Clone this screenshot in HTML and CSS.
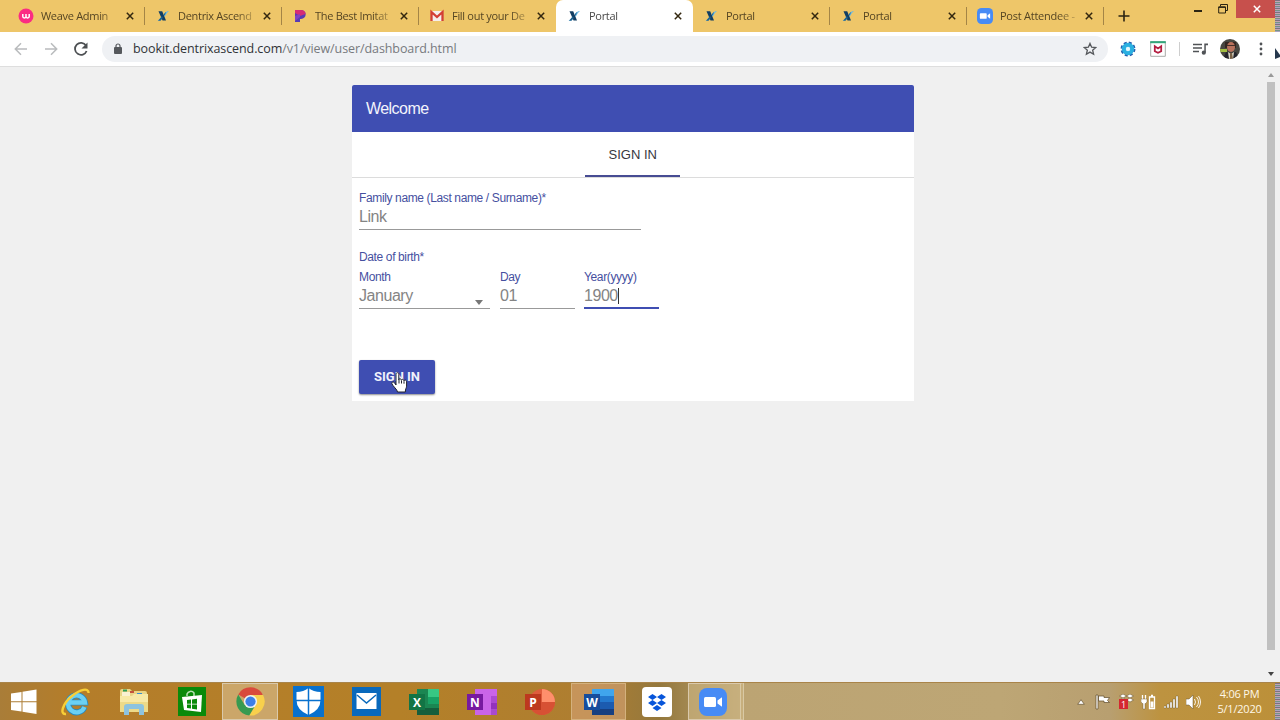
FILE: index.html
```html
<!DOCTYPE html>
<html lang="en">
<head>
    <meta charset="UTF-8">
    <meta name="viewport" content="width=device-width, initial-scale=1.0">
    <title>Portal</title>
    <link rel="stylesheet" href="styles.css">
</head>
<body>
    <svg class="defs" aria-hidden="true">
        <symbol id="close" viewBox="0 0 8 8"><path d="M.8.8l6.4 6.4M7.2.8L.8 7.2" fill="none" stroke="currentColor" stroke-width="1.5"/></symbol>
        <symbol id="portal" viewBox="0 0 16 16">
            <path d="M9 6.500Q10.500 3 14 3Q11.500 4.500 10.500 7.500L7 10.500Q5.500 13 2.500 12.800Q5 11.500 6.500 9z" fill="#69b9e6"/>
            <path d="M3.500 3.200H7.200L11 12.500H7.500z" fill="#123e63"/>
            <path d="M9 6l2-2.300L9.600 8zM3 12.700L7 8l.8 2-2.300 2.700z" fill="#1e6390"/>
        </symbol>
        <symbol id="zoom" viewBox="0 0 28 28">
            <rect width="28" height="28" rx="8" fill="#478bf5"/>
            <rect x="5" y="9" width="12" height="10" rx="1.500" fill="#fff"/>
            <path d="M18.500 12.500L23 9.300v9.400l-4.500-3.200z" fill="#fff"/>
        </symbol>
    </svg>

    <header class="tabs">
        <div class="tab">
            <svg class="favicon" viewBox="0 0 16 16"><circle cx="8" cy="8" r="7.500" fill="#fb2c83"/><path d="M4.800 6v2.600c0 1.800 3.200 1.800 3.200 0V6v2.600c0 1.800 3.200 1.800 3.200 0V6" fill="none" stroke="#fff" stroke-width="1.500"/></svg>
            <span class="tab-title">Weave Admin</span>
            <svg class="close"><use href="#close"/></svg>
        </div>
        <div class="tab">
            <svg class="favicon"><use href="#portal"/></svg>
            <span class="tab-title">Dentrix Ascend</span>
            <svg class="close"><use href="#close"/></svg>
        </div>
        <div class="tab">
            <svg class="favicon" viewBox="0 0 16 16"><path d="M3 2h6c6.500 0 6 9 0 9H8v3H3z" fill="#573bb4"/><path d="M3 2h6c3 0 4.500 2 4.500 4L8 8 3 5z" fill="#d52b75"/><path d="M3 8l5-2v3l-5 4z" fill="#8341c1"/></svg>
            <span class="tab-title">The Best Imitat</span>
            <svg class="close"><use href="#close"/></svg>
        </div>
        <div class="tab no-line">
            <svg class="favicon" viewBox="0 0 16 16"><path d="M2 3h12v10H2z" fill="#f5eeec"/><path d="M2.500 13V4L8 9l5.500-5v9" fill="none" stroke="#d33f35" stroke-width="2.300"/></svg>
            <span class="tab-title">Fill out your De</span>
            <svg class="close"><use href="#close"/></svg>
        </div>
        <div class="tab active no-line">
            <svg class="favicon"><use href="#portal"/></svg>
            <span class="tab-title">Portal</span>
            <svg class="close"><use href="#close"/></svg>
        </div>
        <div class="tab">
            <svg class="favicon"><use href="#portal"/></svg>
            <span class="tab-title">Portal</span>
            <svg class="close"><use href="#close"/></svg>
        </div>
        <div class="tab">
            <svg class="favicon"><use href="#portal"/></svg>
            <span class="tab-title">Portal</span>
            <svg class="close"><use href="#close"/></svg>
        </div>
        <div class="tab">
            <svg class="favicon"><use href="#zoom"/></svg>
            <span class="tab-title tight">Post Attendee -</span>
            <svg class="close"><use href="#close"/></svg>
        </div>
        <svg class="new-tab" viewBox="0 0 12 12"><path d="M6 .5v11M.5 6h11" stroke="#2b2412" stroke-width="1.600"/></svg>
        <div class="window-buttons">
            <svg class="minimize" viewBox="0 0 8 2"><path d="M0 0h8v2H0z" fill="#2b2412"/></svg>
            <svg class="restore" viewBox="0 0 10 10"><path d="M2.500 2.500v-2h7v6h-2M.7 3h6.800v6H.7z" fill="none" stroke="#2b2412"/><path d="M.5 3.200h7" stroke="#2b2412" stroke-width="1.400"/></svg>
            <div class="window-close"><svg viewBox="0 0 8 8"><use href="#close"/></svg></div>
        </div>
        <div class="edge"></div>
    </header>

    <nav class="toolbar">
        <svg class="nav-icon" viewBox="0 0 16 16"><path d="M14 8H2.500M8 2.300L2.300 8 8 13.700" fill="none" stroke="#b9bbbd" stroke-width="1.500"/></svg>
        <svg class="nav-icon" viewBox="0 0 16 16"><path d="M2 8h11.500M8 2.300L13.700 8 8 13.700" fill="none" stroke="#b9bbbd" stroke-width="1.500"/></svg>
        <svg class="nav-icon" viewBox="0 0 16 16"><path d="M13 4.500A6 6 0 1 0 13.600 10" fill="none" stroke="#4d5053" stroke-width="1.800"/><path d="M14.500 1.500v6h-6z" fill="#4d5053"/></svg>
        <div class="omnibox">
            <svg class="lock" viewBox="0 0 8 11"><rect y="4" width="8" height="7" rx="1" fill="#55585c"/><path d="M2 4.500V3a2 2 0 0 1 4 0v1.500" fill="none" stroke="#55585c" stroke-width="1.200"/></svg>
            <span class="url"><b>bookit.dentrixascend.com</b>/v1/view/user/dashboard.html</span>
            <svg class="star" viewBox="0 0 14 14"><path d="M7 1.400l1.650 3.800 4.100.35-3.100 2.700.95 4L7 10.100l-3.600 2.150.95-4-3.100-2.700 4.100-.35z" fill="none" stroke="#55585c" stroke-width="1.300"/></svg>
        </div>
        <svg class="ext-gear" viewBox="0 0 16 16"><circle cx="8" cy="8" r="6.200" fill="none" stroke="#265fae" stroke-width="2.500" stroke-dasharray="2.900 1.970"/><circle cx="8" cy="8" r="4.200" fill="#d6f2fa" stroke="#2bb0e1" stroke-width="4"/><circle cx="8" cy="8" r="1.800" fill="#e6f9fd"/></svg>
        <svg class="ext-shield" viewBox="0 0 16 16"><path d="M.7.7h14.600v14.600H.7z" fill="#fff" stroke="#a8aaa8"/><path d="M.2.2h15.600v2H.2z" fill="#32a77b"/><path d="M4.800 5.300v5L8 11.800l3.200-1.500v-5L8 7.500z" fill="none" stroke="#b51f42" stroke-width="1.800"/></svg>
        <span class="divider"></span>
        <svg class="media" viewBox="0 0 16 14"><path d="M1 2.500h9M1 6h9M1 9.500h6" stroke="#505356" stroke-width="1.500"/><path d="M12.300 10.500v-9H16v1.700h-2.200v7.300z" fill="#505356"/><circle cx="11.800" cy="10.700" r="2.100" fill="#505356"/></svg>
        <svg class="avatar" viewBox="0 0 20 20"><clipPath id="round"><circle cx="10" cy="10" r="10"/></clipPath><g clip-path="url(#round)"><path d="M0 0h20v20H0z" fill="#474640"/><path d="M0 10h7v3H0z" fill="#a3bd42"/><path d="M5 3h11v6H5z" fill="#332621"/><ellipse cx="11" cy="8" rx="4" ry="5" fill="#b8715c"/><path d="M7 6.500h8" stroke="#44302b" stroke-width="1"/><path d="M3 20l3-7 5 1 5-1 3 7z" fill="#24242c"/><path d="M8 13l3 2 3-2-1 7H9z" fill="#ddd8c8"/><path d="M10 14h2l1 6h-3z" fill="#776046"/></g></svg>
        <svg class="dots" viewBox="0 0 4 14"><g fill="#505356"><circle cx="2" cy="2" r="1.400"/><circle cx="2" cy="7" r="1.400"/><circle cx="2" cy="12" r="1.400"/></g></svg>
        <svg class="edge-arrow" viewBox="0 0 5 11"><path d="M0 0l5 7v2L0 11z" fill="#26384d"/></svg>
    </nav>

    <main class="page">
        <form class="card">
            <h1>Welcome</h1>
            <div class="card-tabs"><span class="card-tab">SIGN IN</span></div>
            <div class="fields">
                <div class="field family">
                    <label>Family name (Last name / Surname)*</label>
                    <div class="value">Link</div>
                </div>
                <p class="group-label">Date of birth*</p>
                <div class="birth">
                    <div class="field month">
                        <label>Month</label>
                        <div class="value select">January<span class="arrow"></span></div>
                    </div>
                    <div class="field">
                        <label>Day</label>
                        <div class="value">01</div>
                    </div>
                    <div class="field">
                        <label>Year(yyyy)</label>
                        <div class="value focused">1900<span class="caret"></span></div>
                    </div>
                </div>
                <button type="button" class="submit">SIGN IN
                    <svg class="cursor" viewBox="0 0 17 21"><path d="M5 13V2.200C5 .2 7.800.2 7.800 2.200V8c0-1.600 2.500-1.500 2.600.2.200-1.300 2.500-1.100 2.600.6.400-1.200 2.600-.9 2.600.9v4.500c0 1.500-1.300 2.600-1.300 5.800H6.500c0-2.300-4.700-5.800-5.600-8.300-.5-1.800 1.900-2.400 2.700-.7z" fill="#fff" stroke="#20222d"/><path d="M8 8v3.500M10.500 8.500v3M13 9.200v2.500" stroke="#20222d"/></svg>
                </button>
            </div>
        </form>
        <div class="scrollbar">
            <span class="scroll-up"></span>
            <span class="scroll-thumb"></span>
            <span class="scroll-down"></span>
        </div>
    </main>

    <footer class="taskbar">
        <div class="task start"><svg width="26" height="26" viewBox="0 0 26 26"><path d="M0 4.500l10.500-1.600v9.300H0zM11.500 2.700L25.500.5v11.700h-14zM0 13.200h10.500v9.200L0 21zM11.500 13.200h14v11.700l-14-2.200z" fill="#fff"/></svg></div>
        <div class="task ie"><svg width="30" height="30" viewBox="0 0 30 30"><path d="M23.500 20A8.500 8.500 0 1 1 24 15.500H9" fill="none" stroke="#2689bf" stroke-width="6"/><path d="M23.500 20A8.500 8.500 0 1 1 24 15.500H9" fill="none" stroke="#6bd0f3" stroke-width="4.300"/><path d="M5 27C-2 28 2 16 11 9 19 2 28 .5 27.500 6" fill="none" stroke="#f8cf37" stroke-width="2.400"/></svg></div>
        <div class="task"><svg width="30" height="28" viewBox="0 0 30 28"><path d="M1 3q0-2 2-2h8l2 2h13q2 0 2 2v19H1z" fill="#ead586"/><path d="M3 4h8v5H3z" fill="#faf1d1"/><path d="M4 2.500h4" stroke="#2c9b57" stroke-width="2"/><path d="M11 4h4" stroke="#c6523c" stroke-width="2"/><path d="M18 6h5" stroke="#398ed0" stroke-width="2"/><path d="M1 8h12l2-2h14v18H1z" fill="#f8e9a6"/><path d="M1 14h28v10H1z" fill="#edda88"/><path d="M5 27v-8q0-3 3-3h14q3 0 3 3v8h-5v-6H10v6z" fill="#8dc3df"/></svg></div>
        <div class="task"><svg width="28" height="29" viewBox="0 0 28 29"><path d="M0 0h28v29H0z" fill="#0a8a0a"/><path d="M9 9V7a4 4 0 0 1 7-1v3" fill="none" stroke="#b9dfb5" stroke-width="1.500"/><path d="M4 10l20-2-1 17-17-2z" fill="#fff"/><path d="M9 13l4-.5v4.300H9zm5-.6l5-.6v5h-5zM9 17.600h4v4L9 21zm5 0h5v4.800l-5-.7z" fill="#0a8a0a"/></svg></div>
        <div class="task open"><svg width="29" height="29" viewBox="0 0 30 30"><path d="M15 15L2.300 7.700A14.600 14.600 0 0 1 27.700 7.700z" fill="#d94a3c"/><path d="M15 15V8.300h13a14.600 14.600 0 0 1-14.300 21.200l7-11.500z" fill="#f8d04c"/><path d="M9 18.500L2.300 7.700a14.600 14.600 0 0 0 11.400 21.800l6-10z" fill="#379a50"/><circle cx="15" cy="15" r="6.800" fill="#eef3f2"/><circle cx="15" cy="15" r="5.300" fill="#3d7fe6"/></svg></div>
        <div class="task"><svg width="31" height="31" viewBox="0 0 31 31"><path d="M0 0h31v31H0z" fill="#0871ce"/><path d="M15.500 2q5 4 12 4v8q0 10-12 15-12-5-12-15V6q7 0 12-4z" fill="#fff"/><path d="M15.500 2v27M3 14.500h25" stroke="#0871ce" stroke-width="1.500"/></svg></div>
        <div class="task"><svg width="29" height="29" viewBox="0 0 29 29"><path d="M0 0h29v29H0z" fill="#0969bc"/><path d="M4.500 6h20v16h-20z" fill="#fff"/><path d="M5 8l9.500 8L24 8" fill="none" stroke="#0969bc" stroke-width="1.500"/></svg></div>
        <div class="task"><svg width="32" height="28" viewBox="0 0 32 28"><path d="M9 1h22v26H9z" fill="#1b8652"/><path d="M20 1h11v8H20z" fill="#38c783"/><path d="M20 9h11v7H20z" fill="#19a265"/><path d="M9 20h22v7H9z" fill="#155e3c"/><path d="M1 6h16v16H1z" fill="#127445"/><text x="9" y="19" class="letter">X</text></svg></div>
        <div class="task"><svg width="32" height="28" viewBox="0 0 32 28"><path d="M9 1h22v26H9z" fill="#ca64e8"/><path d="M25 8h6v7h-6z" fill="#ac4ad1"/><path d="M25 15h6v6h-6z" fill="#9332bc"/><path d="M25 21h6v6h-6z" fill="#a94bd0"/><path d="M1 6h16v16H1z" fill="#7719a0"/><text x="9" y="19" class="letter">N</text></svg></div>
        <div class="task"><svg width="32" height="28" viewBox="0 0 32 28"><circle cx="18" cy="14" r="13" fill="#de5c3c"/><path d="M18 14V1a13 13 0 0 1 13 13z" fill="#ff8f6c"/><path d="M31 14a13 13 0 0 1-25 5l12-5z" fill="#d75134"/><path d="M1 6h16v16H1z" fill="#bd391e"/><text x="9" y="19" class="letter">P</text></svg></div>
        <div class="task open word"><svg width="32" height="28" viewBox="0 0 32 28"><path d="M9 1h22v26H9z" fill="#2479ce"/><path d="M9 1h22v7H9z" fill="#40a5ed"/><path d="M9 14h22v7H9z" fill="#1c5baf"/><path d="M9 21h22v6H9z" fill="#173f80"/><path d="M1 6h16v16H1z" fill="#174d9c"/><text x="9" y="19" class="letter">W</text></svg></div>
        <div class="task dropbox"><svg width="30" height="30" viewBox="0 0 30 30"><rect width="30" height="30" rx="4" fill="#fff"/><path d="M10.500 7l4.500 3-4.500 3L6 10zm9 0l4.500 3-4.500 3-4.500-3zm-9 6l4.500 3-4.500 3L6 16zm9 0l4.500 3-4.500 3-4.500-3zM15 18l4.500 3-4.500 3-4.500-3z" fill="#0755da"/></svg></div>
        <div class="task open zoom-task"><svg width="28" height="28"><use href="#zoom"/></svg></div>
        <div class="tray">
            <svg class="tray-up" width="8" height="6" viewBox="0 0 8 6"><path d="M4 .7L7.300 5.300H.7z" fill="#fff" stroke="#665535" stroke-width=".7"/></svg>
            <svg width="16" height="16" viewBox="0 0 16 16"><path d="M1 1h2v14H1zM3.500 2H9v1.500h5.500l-2 3 2 2H9V7H3.500z" fill="#fff" stroke="#5f4b29" stroke-width=".7"/></svg>
            <svg width="15" height="16" viewBox="0 0 15 16"><path d="M4 0l3.500 2L4 4 .5 2zm7 0l3.500 2L11 4 7.500 2zm-7 4l3.500 2L4 8 .5 6zm7 0l3.500 2L11 8 7.500 6z" fill="#fff" stroke="#5f4b29" stroke-width=".5"/><path d="M0 5h9v10H0z" fill="#d42731"/><text x="4.500" y="13.500" class="badge">1</text></svg>
            <svg width="15" height="16" viewBox="0 0 15 16"><path d="M1.500 1v4M4.500 1v4" stroke="#fff" stroke-width="1.300"/><path d="M0 5h6v3L4.500 9.500H4V15H2V9.500h-.5L0 8z" fill="#fff" stroke="#5f4b29" stroke-width=".4"/><path d="M8.500 3h5v11.500h-5zM10 1.500h2" fill="none" stroke="#fff" stroke-width="1.300"/><path d="M9.500 7.500h3v6h-3z" fill="#fff"/></svg>
            <svg width="15" height="14" viewBox="0 0 15 14"><path d="M0 11h2v2H0zm3-2h2v4H3zm3-2h2v6H6zm3-3h2v9H9zm3-3h2v12h-2z" fill="#fff" stroke="#665535" stroke-width=".4"/></svg>
            <svg width="15" height="14" viewBox="0 0 15 14"><path d="M0 4h3l4-4v14l-4-4H0z" fill="#fff" stroke="#665535" stroke-width=".5"/><path d="M8.500 4q2 3 0 6M10.500 2q4 5 0 10M12.500 1q4 6 0 12" fill="none" stroke="#fff" stroke-width=".9"/></svg>
        </div>
        <div class="clock"><span>4:06 PM</span><span>5/1/2020</span></div>
        <div class="edge"></div>
    </footer>
</body>
</html>
```
FILE: styles.css
```css
:root {
    --primary: #3f4eb2;
    --label: #46509f;
    --frame: #eec669;
    --page-bg: #f0f0f0;
}

* {
    margin: 0;
    padding: 0;
    box-sizing: border-box;
}

svg {
    display: block;
    flex: none;
}

.defs {
    position: absolute;
    width: 0;
    height: 0;
}

body {
    width: 1280px;
    height: 720px;
    display: flex;
    flex-direction: column;
    overflow: hidden;
    font-family: "Liberation Sans", Arial, sans-serif;
}

/* Browser tabs */
.tabs {
    height: 32px;
    flex: none;
    display: flex;
    padding-left: 8px;
    background: var(--frame);
    font-family: "Open Sans", "Noto Sans", sans-serif;
}

.tab {
    width: 137px;
    height: 32px;
    flex: none;
    display: flex;
    align-items: center;
    padding: 0 8px 0 10px;
    position: relative;
    color: #554523;
}

.tab::after {
    content: "";
    position: absolute;
    right: 0;
    top: 7px;
    width: 1px;
    height: 18px;
    background: #a48546;
}

.tab.no-line::after {
    display: none;
}

.tab.active {
    background: #fff;
    border-radius: 7px 7px 0 0;
    color: #494949;
}

.favicon {
    width: 16px;
    height: 16px;
    margin-right: 7px;
}

.tab-title {
    width: 78px;
    margin-right: 7px;
    white-space: nowrap;
    font-size: 11px;
    line-height: 20px;
    letter-spacing: -0.3px;
    mask-image: linear-gradient(to right, #000 58px, rgba(0, 0, 0, 0.2) 78px);
}

.tab-title.tight {
    letter-spacing: -0.25px;
}

.close {
    width: 8px;
    height: 8px;
    color: #33270f;
}

.new-tab {
    width: 12px;
    height: 12px;
    margin: 10px 0 0 14px;
}

.window-buttons {
    display: flex;
    margin-left: auto;
}

.minimize {
    width: 8px;
    height: 2px;
    margin: 10px 16px 0 0;
}

.restore {
    width: 10px;
    height: 10px;
    margin: 4px 8px 0 0;
}

.window-close {
    width: 39px;
    height: 18px;
    display: flex;
    align-items: center;
    justify-content: center;
    padding-left: 3px;
    background: #c7504c;
    color: #fff;
}

.window-close svg {
    width: 8px;
    height: 8px;
}

.edge {
    width: 5px;
    flex: none;
    background: repeating-linear-gradient(#7d7180 0 1px, #c5a4b2 1px 2px, #759487 2px 3px, #aaa2c0 3px 4px);
}

/* Address bar */
.toolbar {
    height: 35px;
    flex: none;
    display: flex;
    align-items: center;
    padding: 0 0 1px 13px;
    background: #fff;
    border-bottom: 1px solid #dedede;
}

.nav-icon {
    width: 16px;
    height: 16px;
    margin-right: 14px;
}

.omnibox {
    width: 1006px;
    height: 26px;
    display: flex;
    align-items: center;
    margin-left: -1px;
    padding: 0 11px 0 12px;
    border-radius: 13px;
    background: #eff1f4;
}

.lock {
    width: 8px;
    height: 11px;
    margin-right: 11px;
}

.url {
    flex: 1;
    font: 12.5px "Open Sans", "Noto Sans", sans-serif;
    letter-spacing: -0.09px;
    color: #777a7e;
}

.url b {
    font-weight: normal;
    color: #303337;
}

.star {
    width: 14px;
    height: 14px;
}

.ext-gear {
    width: 16px;
    height: 16px;
    margin-left: 12px;
}

.ext-shield {
    width: 16px;
    height: 16px;
    margin-left: 14px;
}

.divider {
    width: 1px;
    height: 14px;
    margin: 0 12px 0 13px;
    background: #cecece;
}

.media {
    width: 16px;
    height: 14px;
}

.avatar {
    width: 20px;
    height: 20px;
    margin-left: 12px;
}

.dots {
    width: 4px;
    height: 14px;
    margin-left: 19px;
}

.edge-arrow {
    width: 5px;
    height: 11px;
    margin: 10px 0 0 auto;
}

/* Sign in page */
.page {
    flex: 1;
    display: flex;
    background: var(--page-bg);
}

.card {
    width: 562.5px;
    height: 316px;
    margin: 18px auto 0 351.5px;
    background: #fff;
}

.card h1 {
    height: 47px;
    padding-left: 14.5px;
    border-radius: 2px 2px 0 0;
    background: var(--primary);
    color: #f3f4fc;
    font-size: 16px;
    font-weight: normal;
    letter-spacing: -0.55px;
    line-height: 47px;
}

.card-tabs {
    height: 46px;
    display: flex;
    justify-content: center;
    border-bottom: 1px solid #dcdcdc;
}

.card-tab {
    width: 95px;
    height: 45px;
    border-bottom: 2px solid #474c93;
    color: #37373e;
    font-size: 13px;
    line-height: 45px;
    text-align: center;
}

.fields {
    padding: 13px 7.5px 0;
}

.field {
    width: 75px;
}

.family {
    width: 281.5px;
}

.month {
    width: 131px;
}

.field label,
.group-label {
    display: block;
    color: var(--label);
    font-size: 12px;
    letter-spacing: -0.37px;
    line-height: 14px;
    white-space: nowrap;
}

.value {
    height: 25px;
    display: flex;
    border-bottom: 1px solid #999;
    color: #848484;
    font-size: 16px;
    letter-spacing: -0.45px;
    line-height: 23px;
}

.group-label {
    margin: 20px 0 6px;
}

.birth {
    display: flex;
    gap: 10px;
}

.birth .field + .field + .field {
    margin-left: -1px;
}

.select {
    justify-content: space-between;
}

.arrow {
    margin: 16px 7px 0 0;
    height: 0;
    border: 4.5px solid transparent;
    border-top: 5px solid #777;
    border-bottom: 0;
}

.value.focused {
    border-bottom: 2px solid var(--primary);
}

.caret {
    width: 1px;
    height: 16px;
    margin-top: 4px;
    background: #333;
}

.submit {
    width: 76px;
    height: 34px;
    display: block;
    position: relative;
    margin-top: 51px;
    padding-bottom: 2px;
    border: 0;
    border-radius: 2px;
    background: var(--primary);
    box-shadow: 0 1px 2px rgba(0, 0, 0, 0.45);
    color: #f0f1fb;
    font: bold 13px Roboto, sans-serif;
}

.cursor {
    position: absolute;
    left: 32px;
    top: 12px;
    width: 17px;
    height: 21px;
}

.scrollbar {
    width: 9px;
    display: flex;
    flex-direction: column;
    align-items: center;
    margin-right: 5px;
}

.scroll-up,
.scroll-down {
    border: 3px solid transparent;
}

.scroll-up {
    margin-top: 6px;
    border-top: 0;
    border-bottom: 4px solid #999;
}

.scroll-thumb {
    width: 8px;
    height: 568px;
    margin-top: 5px;
    background: #c0c0c0;
}

.scroll-down {
    margin-top: 22px;
    border-top: 4px solid #444;
    border-bottom: 0;
}

/* Windows taskbar */
.taskbar {
    height: 38px;
    flex: none;
    display: flex;
    border-top: 1px solid #a98449;
    background: linear-gradient(to right, #a97d38 0, #b47d2a 70px, #b48028 400px, #ae7e31 590px, #94783d 660px, #bca473 740px, #bda675 1000px, #b89f70 1110px, #bd9340 1160px, #bc9039 1280px);
}

.task {
    width: 58px;
    flex: none;
    display: flex;
    align-items: center;
    justify-content: center;
}

.start {
    width: 47px;
}

.open {
    width: 56px;
    margin: 0 1px;
    background: rgba(226, 205, 170, 0.5);
    border: 1px solid #dac9ab;
}

.word {
    width: 55px;
    margin: 0 1px 0 2px;
    background: rgba(213, 164, 119, 0.6);
    border-color: #d4b17d;
}

.dropbox {
    width: 60px;
}

.zoom-task {
    width: 56px;
    padding-right: 3px;
    border-right: 4px double #d9c9a4;
    background: rgba(205, 181, 131, 0.65);
}

.letter {
    font: bold 12px "Open Sans", sans-serif;
    fill: #fff;
    text-anchor: middle;
}

.tray {
    display: flex;
    align-items: center;
    gap: 7.5px;
    margin-left: auto;
}

.tray-up {
    margin-right: 3px;
}

.badge {
    font: 9px "Open Sans", sans-serif;
    fill: #fff;
    text-anchor: middle;
}

.clock {
    width: 74px;
    display: flex;
    flex-direction: column;
    align-items: center;
    padding: 3px 0 0 3px;
    color: #fff8e8;
    font: 11px/15px "Open Sans", "Noto Sans", sans-serif;
    letter-spacing: -0.2px;
}
```
